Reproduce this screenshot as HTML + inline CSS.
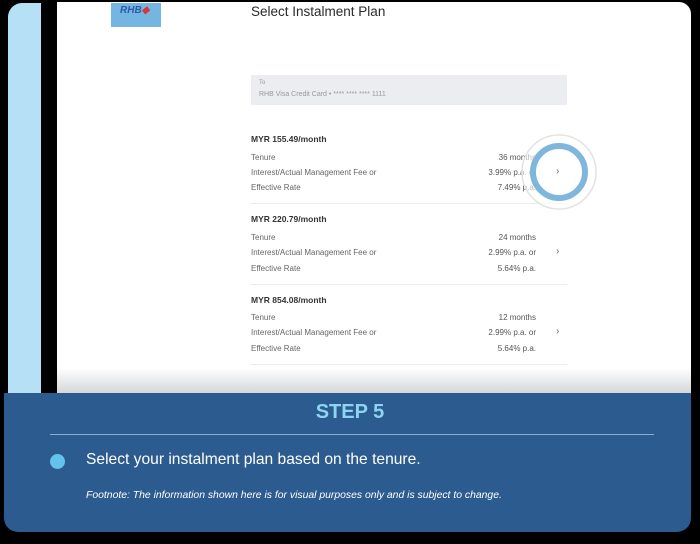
<!DOCTYPE html>
<html><head><style>
body{margin:0;width:700px;height:544px;background:#000;position:relative;overflow:hidden;font-family:"Liberation Sans",sans-serif}
.lb{position:absolute;left:8px;top:3px;width:33px;height:392px;background:#b5e0f5;border-top-left-radius:14px}
.wh{position:absolute;left:57px;top:2px;width:634px;height:392px;background:#fff;border-top-right-radius:12px}
.sh{position:absolute;left:57px;top:368px;width:634px;height:26px;background:linear-gradient(#fff,#d3d5d8)}
.t{position:absolute;font-size:8px;color:#666;white-space:nowrap}
.h{position:absolute;font-size:8.5px;color:#333;font-weight:bold;white-space:nowrap}
.v{position:absolute;font-size:8px;color:#555;right:164px;white-space:nowrap}
.d{position:absolute;left:251px;width:316px;height:1px;background:#ececec}
.c{position:absolute;left:556px;font-size:10px;color:#666}
.bp{position:absolute;left:4px;top:393px;width:687px;height:139px;background:#2c5b8f;border-bottom-left-radius:14px;border-bottom-right-radius:14px}
</style></head><body>
<div class="lb"></div>
<div class="wh"></div>
<div class="sh"></div>
<div style="position:absolute;left:111px;top:3px;width:50px;height:24px;background:#74b5e2"></div>
<div style="position:absolute;left:120px;top:5px;font-size:10px;font-style:italic;font-weight:bold;color:#2c5ba8">RHB<span style="color:#d33">◆</span></div>
<div style="position:absolute;left:251px;top:4px;font-size:13.5px;color:#2a2a2a">Select Instalment Plan</div>
<div style="position:absolute;left:251px;top:75px;width:316px;height:30px;background:#ebedf0"></div>
<div class="t" style="left:259px;top:80px;font-size:6px;color:#999">To</div>
<div class="t" style="left:259px;top:91px;font-size:7px;color:#999">RHB Visa Credit Card • **** **** **** 1111</div>

<div class="h" style="left:251px;top:134px">MYR 155.49/month</div>
<div class="t" style="left:251px;top:153px">Tenure</div><div class="v" style="top:153px">36 months</div>
<div class="t" style="left:251px;top:168px">Interest/Actual Management Fee or</div><div class="v" style="top:168px">3.99% p.a. or</div>
<div class="t" style="left:251px;top:183px">Effective Rate</div><div class="v" style="top:183px">7.49% p.a.</div>
<div class="d" style="top:203px"></div>

<div class="h" style="left:251px;top:214px">MYR 220.79/month</div>
<div class="t" style="left:251px;top:233px">Tenure</div><div class="v" style="top:233px">24 months</div>
<div class="t" style="left:251px;top:248px">Interest/Actual Management Fee or</div><div class="v" style="top:248px">2.99% p.a. or</div>
<div class="t" style="left:251px;top:264px">Effective Rate</div><div class="v" style="top:264px">5.64% p.a.</div>
<div class="c" style="top:246px">›</div>
<div class="d" style="top:284px"></div>

<div class="h" style="left:251px;top:295px">MYR 854.08/month</div>
<div class="t" style="left:251px;top:313px">Tenure</div><div class="v" style="top:313px">12 months</div>
<div class="t" style="left:251px;top:328px">Interest/Actual Management Fee or</div><div class="v" style="top:328px">2.99% p.a. or</div>
<div class="t" style="left:251px;top:344px">Effective Rate</div><div class="v" style="top:344px">5.64% p.a.</div>
<div class="c" style="top:326px">›</div>
<div class="d" style="top:364px"></div>

<svg style="position:absolute;left:519px;top:132px" width="80" height="80">
<circle cx="40" cy="40" r="37" fill="rgba(255,255,255,0.6)" stroke="#e3e3e3" stroke-width="1.5"/>
<circle cx="40" cy="40" r="26" fill="none" stroke="#7fb6dc" stroke-width="6"/>
</svg>
<div class="c" style="top:166px">›</div>

<div class="bp"></div>
<div style="position:absolute;left:0;width:700px;top:401px;text-align:center;font-size:20px;font-weight:bold;color:#8dd4f3">STEP 5</div>
<div style="position:absolute;left:50px;top:434px;width:604px;height:1px;background:#8aaed2"></div>
<div style="position:absolute;left:50px;top:454px;width:15px;height:15px;border-radius:50%;background:#63c3ec"></div>
<div style="position:absolute;left:86px;top:451px;font-size:15.6px;color:#fff">Select your instalment plan based on the tenure.</div>
<div style="position:absolute;left:86px;top:490px;font-size:10.4px;font-style:italic;color:#fff">Footnote: The information shown here is for visual purposes only and is subject to change.</div>
</body></html>
